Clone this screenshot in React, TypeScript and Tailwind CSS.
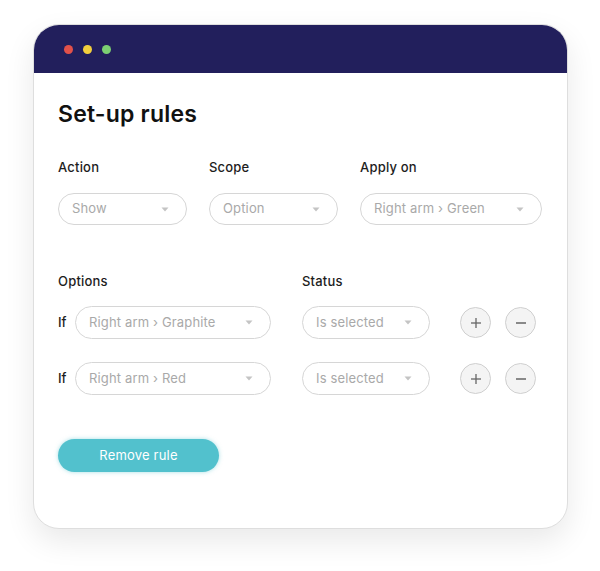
function Caret() {
  return (
    <svg width="8" height="5" viewBox="0 0 8 5" className="shrink-0">
      <path d="M0.5 0.5 L7.5 0.5 L4 4.5 Z" fill="#c4c4c4" />
    </svg>
  );
}

function Select({ value, width, height = 32 }: { value: string; width: number; height?: number }) {
  return (
    <div
      className="flex items-center justify-between rounded-full border border-[#d6d6d6] bg-white pl-[13px] pr-[17px] text-[13px] tracking-[0.15px] text-[#a9a9a9]"
      style={{ width, height }}
    >
      <span>{value}</span>
      <Caret />
    </div>
  );
}

function RoundBtn({ sign }: { sign: "+" | "-" }) {
  return (
    <div className="w-[31px] h-[31px] rounded-full border border-[#cfcfcf] bg-[#f4f4f4] flex items-center justify-center">
      <svg width="12" height="12" viewBox="0 0 12 12">
        <path d="M1 6 H11" stroke="#666" strokeWidth="1.3" />
        {sign === "+" && <path d="M6 1 V11" stroke="#666" strokeWidth="1.3" />}
      </svg>
    </div>
  );
}

export default function App() {
  return (
    <div className="w-[600px] h-[571px] bg-white pt-[24px] pl-[33px] font-['Inter','Liberation_Sans',sans-serif]">
      <div className="w-[535px] h-[505px] rounded-[26px] border border-[#dedede] bg-white overflow-hidden shadow-[0_12px_30px_rgba(0,0,0,0.09)]">
        <div className="h-[48px] bg-[#221f5c] flex items-center gap-[10px] pl-[30px]">
          <span className="w-[9px] h-[9px] rounded-full bg-[#e2514a]" />
          <span className="w-[9px] h-[9px] rounded-full bg-[#f2cf3d]" />
          <span className="w-[9px] h-[9px] rounded-full bg-[#7ccf72]" />
        </div>

        <div className="pl-[24px]">
          <h1 className="mt-[27px] text-[23px] leading-[28px] font-semibold text-[#111] tracking-[0.2px]">Set-up rules</h1>

          <div className="mt-[30px] flex gap-[22px]">
            <div className="flex flex-col gap-[17px]">
              <span className="text-[13px] leading-[18px] font-medium text-[#1d1d1d] tracking-[0.2px]">Action</span>
              <Select value="Show" width={129} />
            </div>
            <div className="flex flex-col gap-[17px]">
              <span className="text-[13px] leading-[18px] font-medium text-[#1d1d1d] tracking-[0.2px]">Scope</span>
              <Select value="Option" width={129} />
            </div>
            <div className="flex flex-col gap-[17px]">
              <span className="text-[13px] leading-[18px] font-medium text-[#1d1d1d] tracking-[0.2px]">Apply on</span>
              <Select value="Right arm › Green" width={182} />
            </div>
          </div>

          <div className="mt-[47px] flex">
            <span className="w-[244px] text-[13px] leading-[18px] font-medium text-[#1d1d1d] tracking-[0.2px]">Options</span>
            <span className="text-[13px] leading-[18px] font-medium text-[#1d1d1d] tracking-[0.2px]">Status</span>
          </div>

          {["Right arm › Graphite", "Right arm › Red"].map((opt, i) => (
            <div key={opt} className={`flex items-center ${i === 0 ? "mt-[16px]" : "mt-[23px]"}`}>
              <span className="w-[17px] text-[13px] font-medium text-[#1d1d1d]">If</span>
              <Select value={opt} width={196} height={33} />
              <div className="ml-[31px]">
                <Select value="Is selected" width={128} height={33} />
              </div>
              <div className="ml-[30px] flex gap-[14px]">
                <RoundBtn sign="+" />
                <RoundBtn sign="-" />
              </div>
            </div>
          ))}

          <button className="mt-[44px] w-[161px] h-[33px] rounded-full bg-[#52c1cd] text-white text-[13px] tracking-[0.2px] shadow-[0_0_4px_rgba(82,193,205,0.5)]">
            Remove rule
          </button>
        </div>
      </div>
    </div>
  );
}
